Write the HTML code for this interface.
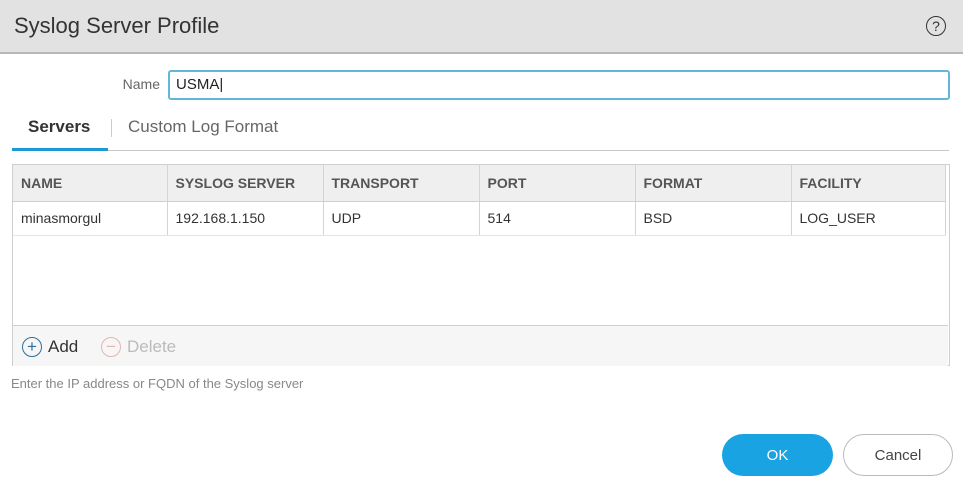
<html><head><style>
body{margin:0;width:963px;height:485px;background:#fff;font-family:"Liberation Sans",sans-serif;position:relative;overflow:hidden;color:#333}
.a{position:absolute}
.hd{left:0;top:0;width:963px;height:52px;background:#e2e2e2;border-bottom:2px solid #b8b8b8}
th,td{padding:0 0 0 8px;text-align:left;font-size:14px;border-right:1px solid #d4d4d4;box-sizing:border-box}
th{height:36px;background:#efefef;color:#555;font-weight:bold;border-bottom:1px solid #cfcfcf}
td{height:34px;border-bottom:1px solid #e4e4e4}
table{border-collapse:collapse;table-layout:fixed}
</style></head><body>
<div class="a hd"></div>
<div class="a" style="left:14px;top:13px;font-size:22px;color:#333">Syslog Server Profile</div>
<div class="a" style="left:926px;top:16px;width:18px;height:18px;border:1.5px solid #333;border-radius:50%;font-size:14px;text-align:center;line-height:18px">?</div>
<div class="a" style="left:110px;top:76px;width:50px;text-align:right;font-size:14px;color:#666">Name</div>
<div class="a" style="left:168px;top:70px;width:778px;height:26px;border:2px solid #62b6d9;border-radius:3px;"></div>
<div class="a" style="left:176px;top:76px;font-size:15px;color:#222">USMA|</div>
<div class="a" style="left:28px;top:117px;font-size:17px;font-weight:bold;color:#333">Servers</div>
<div class="a" style="left:111px;top:119px;width:1px;height:18px;background:#ccc"></div>
<div class="a" style="left:128px;top:117px;font-size:17px;color:#666">Custom Log Format</div>
<div class="a" style="left:12px;top:150px;width:937px;height:1px;background:#c8c8c8"></div>
<div class="a" style="left:12px;top:148px;width:96px;height:3px;background:#1d9ad6"></div>
<div class="a" style="left:12px;top:164px;width:936px;height:200px;border:1px solid #cfcfcf;background:#fff"></div>
<table class="a" style="left:13px;top:165px;width:933px">
<colgroup><col style="width:154px"><col style="width:156px"><col style="width:156px"><col style="width:156px"><col style="width:156px"><col></colgroup>
<tr><th>NAME</th><th>SYSLOG SERVER</th><th>TRANSPORT</th><th>PORT</th><th>FORMAT</th><th>FACILITY</th></tr>
<tr><td>minasmorgul</td><td>192.168.1.150</td><td>UDP</td><td>514</td><td>BSD</td><td>LOG_USER</td></tr>
</table>
<div class="a" style="left:13px;top:325px;width:935px;height:40px;background:#f6f6f6;border-top:1px solid #d0d0d0"></div>
<div class="a" style="left:22px;top:337px;width:18px;height:18px;border:1.5px solid #2d6f9a;border-radius:50%;text-align:center;line-height:18px;font-size:17px;color:#2d6f9a">+</div>
<div class="a" style="left:48px;top:337px;font-size:17px;color:#333">Add</div>
<div class="a" style="left:101px;top:337px;width:18px;height:18px;border:1.5px solid #e8b3b3;border-radius:50%;text-align:center;line-height:17px;font-size:17px;color:#e8b3b3">−</div>
<div class="a" style="left:127px;top:337px;font-size:17px;color:#bbb">Delete</div>
<div class="a" style="left:11px;top:376px;font-size:13px;color:#888">Enter the IP address or FQDN of the Syslog server</div>
<div class="a" style="left:722px;top:434px;width:111px;height:42px;background:#1aa3e3;border-radius:21px;color:#fff;font-size:15px;text-align:center;line-height:44px">OK</div>
<div class="a" style="left:843px;top:434px;width:108px;height:40px;border:1px solid #bbb;border-radius:21px;color:#444;font-size:15px;text-align:center;line-height:42px">Cancel</div>
</body></html>
